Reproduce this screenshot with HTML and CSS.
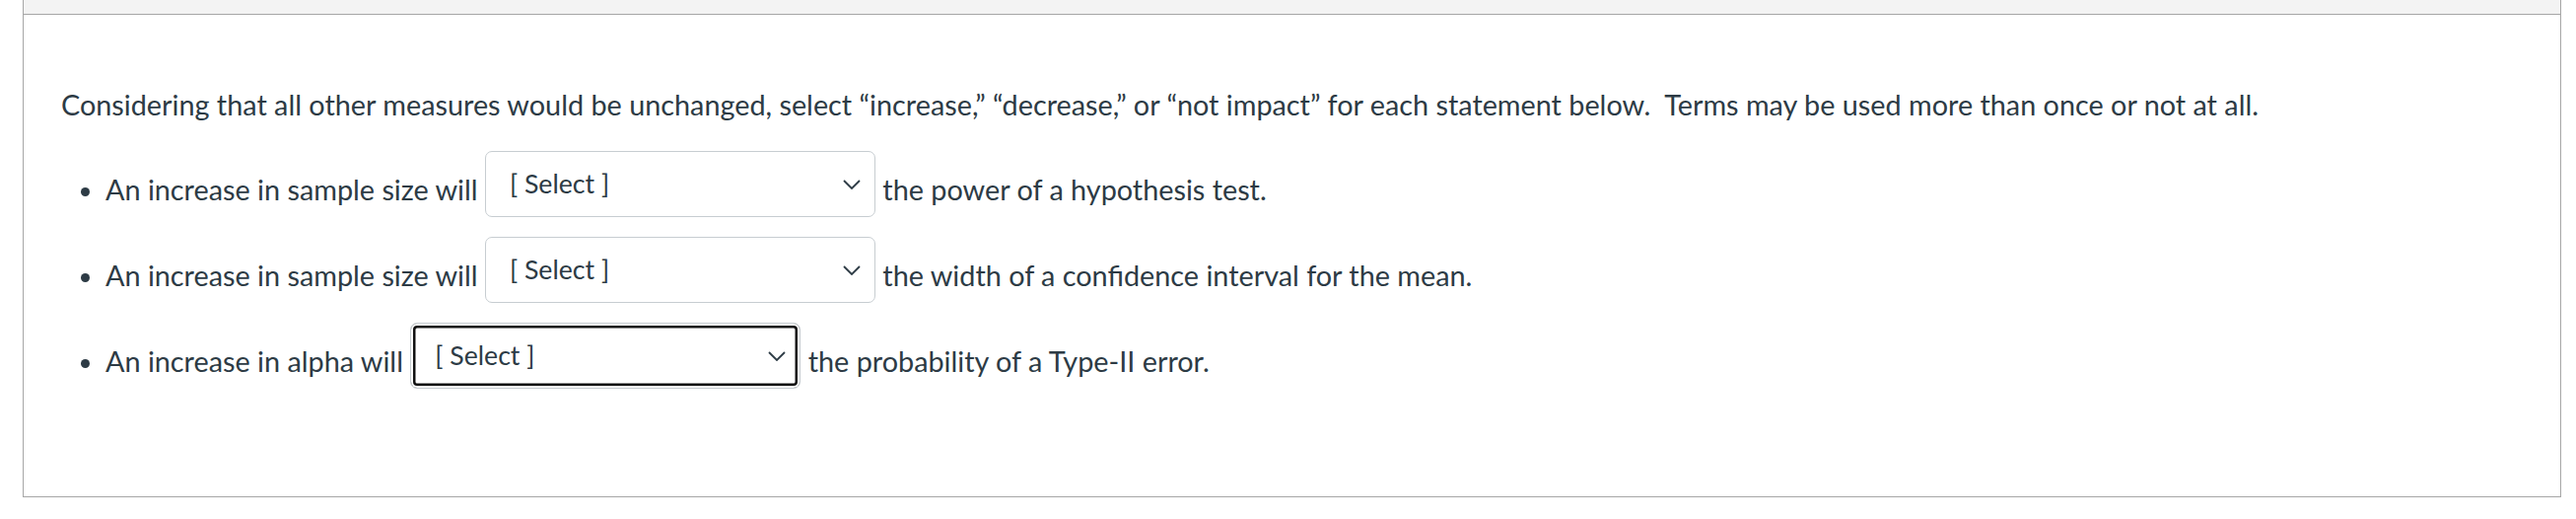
FILE: index.html
```html
<!DOCTYPE html>
<html lang="en">
<head>
<meta charset="utf-8">
<title>Quiz question</title>
<link rel="stylesheet" href="styles.css">
</head>
<body>
<div class="question">
  <div class="question-header"></div>
  <div class="question-text">
    <p class="prompt">Considering that all other measures would be unchanged, select “increase,” “decrease,” or “not impact” for each statement below.&nbsp; Terms may be used more than once or not at all.</p>
    <ul class="statements">
      <li>An increase in sample size will <span class="select"><span class="select-value">[ Select ]</span><svg class="chevron" width="18" height="10" viewBox="0 0 18 10" aria-hidden="true"><path d="M1 1 L9 9 L17 1"/></svg></span> the power of a hypothesis test.</li>
      <li>An increase in sample size will <span class="select"><span class="select-value">[ Select ]</span><svg class="chevron" width="18" height="10" viewBox="0 0 18 10" aria-hidden="true"><path d="M1 1 L9 9 L17 1"/></svg></span> the width of a confidence interval for the mean.</li>
      <li>An increase in alpha will <span class="select select-focused"><span class="select-value">[ Select ]</span><svg class="chevron" width="18" height="10" viewBox="0 0 18 10" aria-hidden="true"><path d="M1 1 L9 9 L17 1"/></svg></span> the probability of a Type-II error.</li>
    </ul>
  </div>
</div>
</body>
</html>
```
FILE: styles.css
```css
html, body {
  margin: 0;
  padding: 0;
  background: #ffffff;
}

body {
  font-family: Lato, "Liberation Sans", sans-serif;
  font-size: 28.8px;
  color: #2d3b45;
}

.question {
  margin: 0 15px 0 23px;
  border: 1px solid #a6a6a6;
  border-top: none;
  background: #ffffff;
}

.question-header {
  height: 14px;
  background: #f3f3f3;
  border-bottom: 1px solid #a6a6a6;
}

.question-text {
  padding: 74px 37px 109px 38px;
}

.prompt {
  margin: 0;
  line-height: 34px;
}

.statements {
  margin: 30px 0 0;
  padding-left: 45px;
  list-style: disc;
}

.statements li {
  line-height: 34px;
  margin-bottom: 20px;
}

.statements li:last-child {
  margin-bottom: 0;
}

.select {
  display: inline-flex;
  align-items: center;
  box-sizing: border-box;
  width: 396px;
  height: 67px;
  margin: 0;
  padding: 0 14px 2px 24px;
  border: 1px solid #c7cdd1;
  border-radius: 7px;
  background: #ffffff;
  font-size: 26.67px;
  vertical-align: 7px;
}

.select-focused {
  box-shadow: inset 0 0 0 2px #ffffff, inset 0 0 0 4.5px #111111;
}

.select-value {
  flex: 1;
  line-height: 32px;
}

.chevron {
  flex: none;
  margin-top: 3px;
  fill: none;
  stroke: #2d3b45;
  stroke-width: 1.8;
}
```
